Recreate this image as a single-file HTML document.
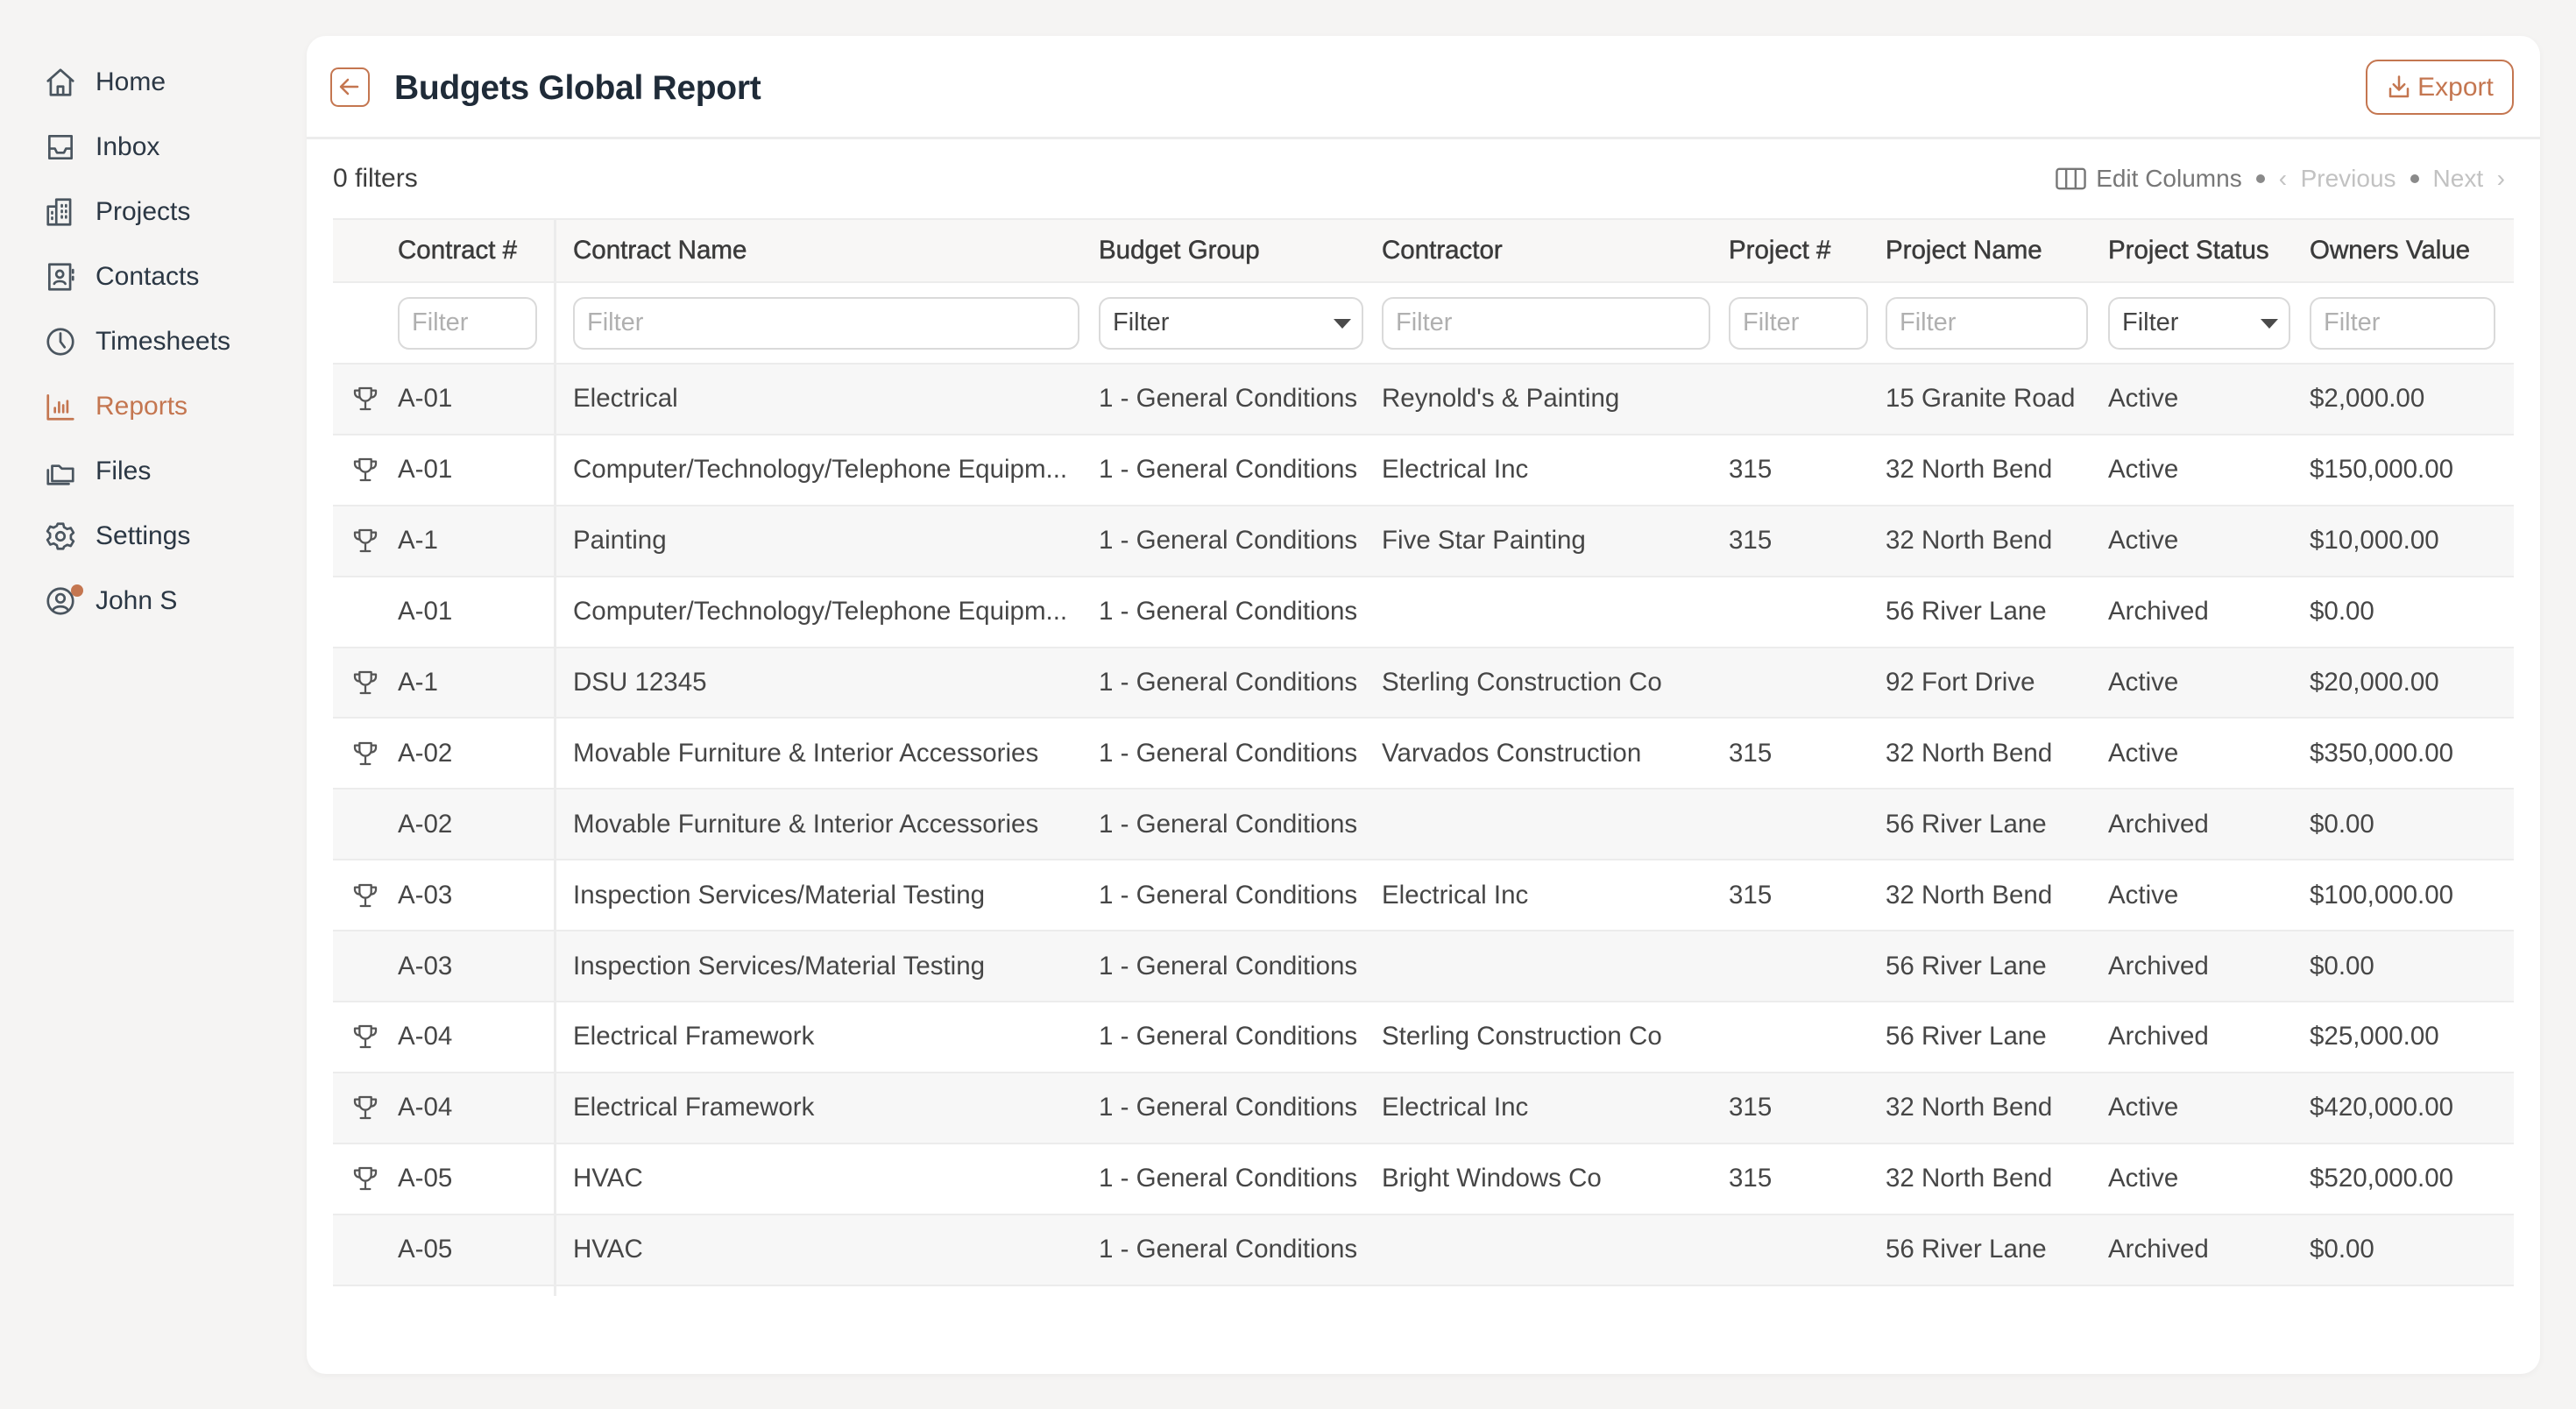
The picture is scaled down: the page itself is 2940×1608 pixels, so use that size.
<!DOCTYPE html>
<html><head><meta charset="utf-8"><style>
*{box-sizing:border-box;margin:0;padding:0}
body{width:2940px;height:1608px;background:#f5f4f3;font-family:"Liberation Sans",sans-serif;color:#444;position:relative;overflow:hidden}
.nav{position:absolute;left:0;top:0}
.ni{position:absolute;left:50px;height:40px;display:flex;align-items:center;font-size:30px;color:#2b3744;white-space:nowrap}
.ni svg{width:38px;height:38px;margin-right:21px;fill:none;stroke:#4a555f;stroke-width:1.7;stroke-linecap:round;stroke-linejoin:round}
.ni.act{color:#c47650}.ni.act svg{stroke:#c47650}
.card{position:absolute;left:350px;top:41px;width:2549px;height:1527px;background:#fff;border-radius:22px;box-shadow:0 2px 8px rgba(0,0,0,.04)}
.hdr{position:absolute;left:0;top:0;width:100%;height:118px;border-bottom:3px solid #ececec}
.back{position:absolute;left:27px;top:36px;width:45px;height:45px;border:2.5px solid #c47650;border-radius:9px}
.title{position:absolute;left:100px;top:38px;font-size:39px;font-weight:bold;color:#1f2b38;letter-spacing:-.3px}
.exp{position:absolute;left:2350px;top:27px;width:169px;height:63px;border:2.5px solid #c47650;border-radius:14px;color:#c47650;font-size:30px;display:flex;align-items:center;justify-content:center}
.flt{position:absolute;left:30px;top:146px;font-size:30px;color:#3d3d3d}
.tb{position:absolute;right:40px;top:147px;font-size:28px;display:flex;align-items:center;color:#777;white-space:nowrap}
.tb .dim{color:#c2c2c2}
.dot{display:inline-block;width:10px;height:10px;border-radius:5px;background:#8a8a8a;margin:0 16px}
.tbl{position:absolute;left:30px;top:208px;width:2489px}
.row{position:relative;height:80.9px;border-bottom:2.5px solid #ececec;font-size:29.5px;color:#464646;white-space:nowrap}
.row.g{background:#f7f7f7}
.row span{position:absolute;top:50%;transform:translateY(-50%)}
.th{height:74px;background:#f8f7f6;border-top:2.5px solid #ececec;color:#3b3b3b}
.th span{-webkit-text-stroke:.5px #3b3b3b}
.fr{height:93px;background:#fff}
.inp{position:absolute;top:16px;height:60px;border:2.5px solid #dadada;border-radius:13px;color:#b0b0b0;font-size:29px;padding-left:14px;line-height:55px}
.sel{color:#444}
.sel:after{content:"";position:absolute;right:12px;top:23px;border-left:10px solid transparent;border-right:10px solid transparent;border-top:11px solid #4a4a4a}
.vl{position:absolute;left:252px;top:0;width:2.5px;height:1230px;background:#ececec;z-index:5}
.tr{width:34px;height:32px;left:20px;fill:none;stroke:#555;stroke-width:1.7;stroke-linecap:round;stroke-linejoin:round}
.c1{left:74px}.c2{left:274px}.c3{left:874px}.c4{left:1197px}.c5{left:1593px}.c6{left:1772px}.c7{left:2026px}.c8{left:2256px}
</style></head><body>
<div class="nav">
<div class="ni" style="top:74px"><svg viewBox="0 0 24 24"><path d="M3 11 12 3l9 8M5 9.5V21h14V9.5M10 21v-6h4v6"/></svg>Home</div>
<div class="ni" style="top:148px"><svg viewBox="0 0 24 24"><path d="M4 4h16v16H4zM4 13h4l1.5 3h5L16 13h4"/></svg>Inbox</div>
<div class="ni" style="top:222px"><svg viewBox="0 0 24 24"><path d="M3 8h6v13H3zM9 3h10v18H9zM6 12v1M6 16v1M13 7v1M16 7v1M13 11v1M16 11v1M13 15v1M16 15v1"/></svg>Projects</div>
<div class="ni" style="top:296px"><svg viewBox="0 0 24 24"><path d="M4 3h15v18H4zM21 7v2M21 12v2"/><circle cx="11.5" cy="10" r="2.5"/><path d="M7.5 17c1-2.5 7-2.5 8 0"/></svg>Contacts</div>
<div class="ni" style="top:370px"><svg viewBox="0 0 24 24"><circle cx="12" cy="12" r="9"/><path d="M12 6v6l3 4"/></svg>Timesheets</div>
<div class="ni act" style="top:444px"><svg viewBox="0 0 24 24"><path d="M3 4v17h18M8 16v-3M11 16V9M14 16v-5M17 16V8"/></svg>Reports</div>
<div class="ni" style="top:518px"><svg viewBox="0 0 24 24"><path d="M6 8h5l2 2h8v9H6zM3 11v10h15"/></svg>Files</div>
<div class="ni" style="top:592px"><svg viewBox="0 0 24 24"><circle cx="12" cy="12" r="3"/><path d="M10 3h4l.6 2.5 2.3 1.3 2.5-.8 2 3.4-1.9 1.8v2.6l1.9 1.8-2 3.4-2.5-.8-2.3 1.3L14 21h-4l-.6-2.5-2.3-1.3-2.5.8-2-3.4 1.9-1.8v-2.6L2.6 8.4l2-3.4 2.5.8 2.3-1.3z"/></svg>Settings</div>
<div class="ni" style="top:666px"><svg viewBox="0 0 24 24"><circle cx="12" cy="12" r="9"/><circle cx="12" cy="10" r="3"/><path d="M6.5 18.5c2-3.5 9-3.5 11 0"/></svg>John S</div>
<div style="position:absolute;left:81px;top:667px;width:14px;height:14px;border-radius:7px;background:#c47650"></div>
</div>
<div class="card">
<div class="hdr">
<div class="back"><svg viewBox="0 0 40 40" width="40" height="40" style="fill:none;stroke:#c47650;stroke-width:2.5;stroke-linecap:round;stroke-linejoin:round"><path d="M29 20H11M18 12l-8 8 8 8"/></svg></div>
<div class="title">Budgets Global Report</div>
<div class="exp"><svg viewBox="0 0 24 24" width="30" height="30" style="fill:none;stroke:#c47650;stroke-width:2;stroke-linecap:round;stroke-linejoin:round;margin-right:6px"><path d="M12 2v12M7 9l5 5 5-5M4 13v7h16v-7"/></svg>Export</div>
</div>
<div class="flt">0 filters</div>
<div class="tb"><svg viewBox="0 0 36 26" width="35" height="26" style="fill:none;stroke:#777;stroke-width:2.5;margin-right:11px"><rect x="1.5" y="1.5" width="33" height="23" rx="3"/><path d="M12.5 2v22M23.5 2v22"/></svg>Edit Columns<span class="dot"></span><span class="dim">&lsaquo;&nbsp; Previous</span><span class="dot"></span><span class="dim">Next &nbsp;&rsaquo;</span></div>
<div class="tbl">
<div class="vl"></div>
<div class="row th"><span class="c1">Contract #</span><span class="c2">Contract Name</span><span class="c3">Budget Group</span><span class="c4">Contractor</span><span class="c5">Project #</span><span class="c6">Project Name</span><span class="c7">Project Status</span><span class="c8">Owners Value</span></div>
<div class="row fr">
<div class="inp" style="left:74px;width:159px">Filter</div>
<div class="inp" style="left:274px;width:578px">Filter</div>
<div class="inp sel" style="left:874px;width:302px">Filter</div>
<div class="inp" style="left:1197px;width:375px">Filter</div>
<div class="inp" style="left:1593px;width:159px">Filter</div>
<div class="inp" style="left:1772px;width:231px">Filter</div>
<div class="inp sel" style="left:2026px;width:208px">Filter</div>
<div class="inp" style="left:2256px;width:212px">Filter</div>
</div>
<div class="row g"><span class="tr"><svg class="tr" style="position:static;transform:none" viewBox="0 0 24 24"><path d="M7 3h10v6a5 5 0 0 1-10 0zM7 5H3v2a4 4 0 0 0 4 4M17 5h4v2a4 4 0 0 1-4 4M12 14v6M8 21h8"/></svg></span><span class="c1">A-01</span><span class="c2">Electrical</span><span class="c3">1 - General Conditions</span><span class="c4">Reynold's &amp; Painting</span><span class="c6">15 Granite Road</span><span class="c7">Active</span><span class="c8">$2,000.00</span></div>
<div class="row"><span class="tr"><svg class="tr" style="position:static;transform:none" viewBox="0 0 24 24"><path d="M7 3h10v6a5 5 0 0 1-10 0zM7 5H3v2a4 4 0 0 0 4 4M17 5h4v2a4 4 0 0 1-4 4M12 14v6M8 21h8"/></svg></span><span class="c1">A-01</span><span class="c2">Computer/Technology/Telephone Equipm...</span><span class="c3">1 - General Conditions</span><span class="c4">Electrical Inc</span><span class="c5">315</span><span class="c6">32 North Bend</span><span class="c7">Active</span><span class="c8">$150,000.00</span></div>
<div class="row g"><span class="tr"><svg class="tr" style="position:static;transform:none" viewBox="0 0 24 24"><path d="M7 3h10v6a5 5 0 0 1-10 0zM7 5H3v2a4 4 0 0 0 4 4M17 5h4v2a4 4 0 0 1-4 4M12 14v6M8 21h8"/></svg></span><span class="c1">A-1</span><span class="c2">Painting</span><span class="c3">1 - General Conditions</span><span class="c4">Five Star Painting</span><span class="c5">315</span><span class="c6">32 North Bend</span><span class="c7">Active</span><span class="c8">$10,000.00</span></div>
<div class="row"><span class="c1">A-01</span><span class="c2">Computer/Technology/Telephone Equipm...</span><span class="c3">1 - General Conditions</span><span class="c6">56 River Lane</span><span class="c7">Archived</span><span class="c8">$0.00</span></div>
<div class="row g"><span class="tr"><svg class="tr" style="position:static;transform:none" viewBox="0 0 24 24"><path d="M7 3h10v6a5 5 0 0 1-10 0zM7 5H3v2a4 4 0 0 0 4 4M17 5h4v2a4 4 0 0 1-4 4M12 14v6M8 21h8"/></svg></span><span class="c1">A-1</span><span class="c2">DSU 12345</span><span class="c3">1 - General Conditions</span><span class="c4">Sterling Construction Co</span><span class="c6">92 Fort Drive</span><span class="c7">Active</span><span class="c8">$20,000.00</span></div>
<div class="row"><span class="tr"><svg class="tr" style="position:static;transform:none" viewBox="0 0 24 24"><path d="M7 3h10v6a5 5 0 0 1-10 0zM7 5H3v2a4 4 0 0 0 4 4M17 5h4v2a4 4 0 0 1-4 4M12 14v6M8 21h8"/></svg></span><span class="c1">A-02</span><span class="c2">Movable Furniture &amp; Interior Accessories</span><span class="c3">1 - General Conditions</span><span class="c4">Varvados Construction</span><span class="c5">315</span><span class="c6">32 North Bend</span><span class="c7">Active</span><span class="c8">$350,000.00</span></div>
<div class="row g"><span class="c1">A-02</span><span class="c2">Movable Furniture &amp; Interior Accessories</span><span class="c3">1 - General Conditions</span><span class="c6">56 River Lane</span><span class="c7">Archived</span><span class="c8">$0.00</span></div>
<div class="row"><span class="tr"><svg class="tr" style="position:static;transform:none" viewBox="0 0 24 24"><path d="M7 3h10v6a5 5 0 0 1-10 0zM7 5H3v2a4 4 0 0 0 4 4M17 5h4v2a4 4 0 0 1-4 4M12 14v6M8 21h8"/></svg></span><span class="c1">A-03</span><span class="c2">Inspection Services/Material Testing</span><span class="c3">1 - General Conditions</span><span class="c4">Electrical Inc</span><span class="c5">315</span><span class="c6">32 North Bend</span><span class="c7">Active</span><span class="c8">$100,000.00</span></div>
<div class="row g"><span class="c1">A-03</span><span class="c2">Inspection Services/Material Testing</span><span class="c3">1 - General Conditions</span><span class="c6">56 River Lane</span><span class="c7">Archived</span><span class="c8">$0.00</span></div>
<div class="row"><span class="tr"><svg class="tr" style="position:static;transform:none" viewBox="0 0 24 24"><path d="M7 3h10v6a5 5 0 0 1-10 0zM7 5H3v2a4 4 0 0 0 4 4M17 5h4v2a4 4 0 0 1-4 4M12 14v6M8 21h8"/></svg></span><span class="c1">A-04</span><span class="c2">Electrical Framework</span><span class="c3">1 - General Conditions</span><span class="c4">Sterling Construction Co</span><span class="c6">56 River Lane</span><span class="c7">Archived</span><span class="c8">$25,000.00</span></div>
<div class="row g"><span class="tr"><svg class="tr" style="position:static;transform:none" viewBox="0 0 24 24"><path d="M7 3h10v6a5 5 0 0 1-10 0zM7 5H3v2a4 4 0 0 0 4 4M17 5h4v2a4 4 0 0 1-4 4M12 14v6M8 21h8"/></svg></span><span class="c1">A-04</span><span class="c2">Electrical Framework</span><span class="c3">1 - General Conditions</span><span class="c4">Electrical Inc</span><span class="c5">315</span><span class="c6">32 North Bend</span><span class="c7">Active</span><span class="c8">$420,000.00</span></div>
<div class="row"><span class="tr"><svg class="tr" style="position:static;transform:none" viewBox="0 0 24 24"><path d="M7 3h10v6a5 5 0 0 1-10 0zM7 5H3v2a4 4 0 0 0 4 4M17 5h4v2a4 4 0 0 1-4 4M12 14v6M8 21h8"/></svg></span><span class="c1">A-05</span><span class="c2">HVAC</span><span class="c3">1 - General Conditions</span><span class="c4">Bright Windows Co</span><span class="c5">315</span><span class="c6">32 North Bend</span><span class="c7">Active</span><span class="c8">$520,000.00</span></div>
<div class="row g"><span class="c1">A-05</span><span class="c2">HVAC</span><span class="c3">1 - General Conditions</span><span class="c6">56 River Lane</span><span class="c7">Archived</span><span class="c8">$0.00</span></div>
</div>
</div>
</body></html>
